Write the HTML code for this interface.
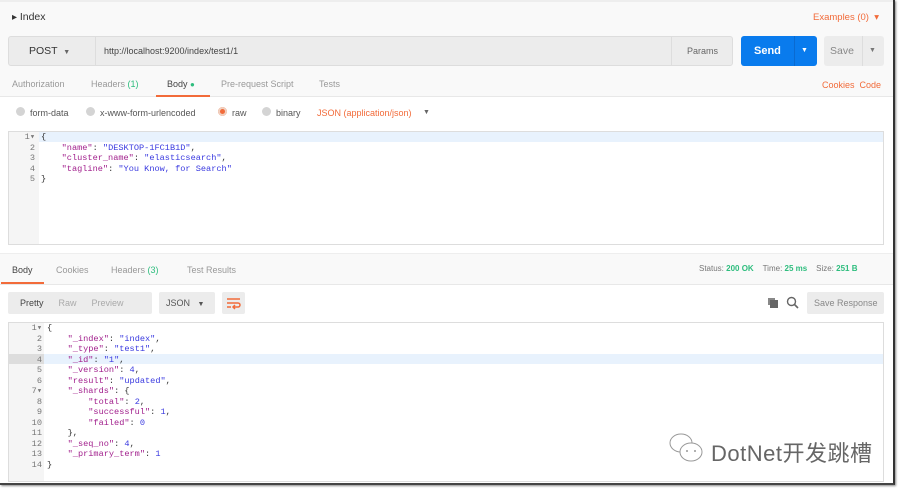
<!DOCTYPE html>
<html><head><meta charset="utf-8"><style>
*{margin:0;padding:0;box-sizing:border-box}
body{width:900px;height:489px;background:#fff;font-family:"Liberation Sans",sans-serif;position:relative;overflow:hidden;font-size:9px;color:#505050}
.a{position:absolute}
.mono{font-family:"Liberation Mono",monospace;font-size:8.6px;line-height:10.5px;white-space:pre}
.k{color:#a11f8c}.s{color:#3a3ae0}.n{color:#3a3ae0}
.org{color:#f26b3a}.grn{color:#2ebd7e}
.dot{position:absolute;width:9px;height:9px;border-radius:50%;background:#d4d4d4;top:107px}
</style></head><body>
<div class="a" style="left:0;top:0;width:895px;height:485px;background:#fff;border-right:2px solid #333;border-bottom:2px solid #444;box-shadow:1px 1px 2px #888"></div>
<div class="a" style="left:0;top:0;width:893px;height:97px;background:#f9f9f9;border-bottom:1px solid #e8e8e8"></div>
<div class="a" style="left:0;top:0;width:893px;height:2px;background:#eee"></div>
<div class="a" style="left:12px;top:11px;font-size:10px;color:#333">▸ <span style="font-size:10.5px">Index</span></div>
<div class="a org" style="left:813px;top:12px;font-size:9.5px">Examples (0) &nbsp;▾</div>
<div class="a" style="left:8px;top:36px;width:725px;height:30px;background:#ececec;border:1px solid #ddd;border-radius:3px"></div>
<div class="a" style="left:95px;top:36px;width:1px;height:30px;background:#ddd"></div>
<div class="a" style="left:671px;top:36px;width:1px;height:30px;background:#ddd"></div>
<div class="a" style="left:29px;top:45px;font-size:10.5px;color:#333">POST &nbsp;<span style="font-size:7px;color:#666">▼</span></div>
<div class="a" style="left:104px;top:46px;font-size:9px;color:#444">http://localhost:9200/index/test1/1</div>
<div class="a" style="left:687px;top:46px;font-size:9px;color:#666">Params</div>
<div class="a" style="left:741px;top:36px;width:76px;height:30px;background:#097bed;border-radius:3px"></div>
<div class="a" style="left:794px;top:36px;width:1px;height:30px;background:#0a6ad0"></div>
<div class="a" style="left:754px;top:45px;font-size:11px;color:#fff;font-weight:bold">Send</div>
<div class="a" style="left:801px;top:47px;font-size:7px;color:#fff">▼</div>
<div class="a" style="left:824px;top:36px;width:60px;height:30px;background:#ececec;border-radius:3px"></div>
<div class="a" style="left:862px;top:36px;width:1px;height:30px;background:#ddd"></div>
<div class="a" style="left:830px;top:45px;font-size:10.5px;color:#888">Save</div>
<div class="a" style="left:869px;top:47px;font-size:7px;color:#777">▼</div>
<div class="a" style="left:12px;top:79px;font-size:9px;color:#999">Authorization</div>
<div class="a" style="left:91px;top:79px;font-size:9px;color:#999">Headers <span class="grn">(1)</span></div>
<div class="a" style="left:167px;top:79px;font-size:9px;color:#444">Body <span class="grn" style="font-size:8px">●</span></div>
<div class="a" style="left:156px;top:95px;width:54px;height:2px;background:#f26b3a"></div>
<div class="a" style="left:221px;top:79px;font-size:9px;color:#999">Pre-request Script</div>
<div class="a" style="left:319px;top:79px;font-size:9px;color:#999">Tests</div>
<div class="a org" style="left:822px;top:80px;font-size:9px">Cookies &nbsp;Code</div>
<div class="dot" style="left:16px"></div>
<div class="a" style="left:30px;top:108px;font-size:9px;color:#555">form-data</div>
<div class="dot" style="left:86px"></div>
<div class="a" style="left:100px;top:108px;font-size:9px;color:#555">x-www-form-urlencoded</div>
<div class="dot" style="left:218px;background:#f26b3a;box-shadow:inset 0 0 0 2px #f0d0c0"></div>
<div class="a" style="left:232px;top:108px;font-size:9px;color:#555">raw</div>
<div class="dot" style="left:262px"></div>
<div class="a" style="left:276px;top:108px;font-size:9px;color:#555">binary</div>
<div class="a org" style="left:317px;top:108px;font-size:9px">JSON (application/json)</div>
<div class="a" style="left:423px;top:109px;font-size:7px;color:#666">▼</div>
<div class="a" style="left:8px;top:131px;width:876px;height:114px;border:1px solid #ddd;background:#fff"></div>
<div class="a" style="left:9px;top:132px;width:30px;height:112px;background:#f5f5f5"></div>
<div class="a" style="left:39px;top:132px;width:844px;height:10px;background:#e8f2fd"></div>
<div class="a mono" style="left:9px;top:132px;width:26px;text-align:right;color:#777">1▾
2
3
4
5</div>
<div class="a mono" style="left:41px;top:132px;color:#333">{
    <span class="k">"name"</span>: <span class="s">"DESKTOP-1FC1B1D"</span>,
    <span class="k">"cluster_name"</span>: <span class="s">"elasticsearch"</span>,
    <span class="k">"tagline"</span>: <span class="s">"You Know, for Search"</span>
}</div>
<div class="a" style="left:0;top:253px;width:893px;height:32px;background:#f9f9f9;border-top:1px solid #eee;border-bottom:1px solid #e8e8e8"></div>
<div class="a" style="left:12px;top:265px;font-size:9px;color:#444">Body</div>
<div class="a" style="left:1px;top:282px;width:43px;height:2px;background:#f26b3a"></div>
<div class="a" style="left:56px;top:265px;font-size:9px;color:#999">Cookies</div>
<div class="a" style="left:111px;top:265px;font-size:9px;color:#999">Headers <span class="grn">(3)</span></div>
<div class="a" style="left:187px;top:265px;font-size:9px;color:#999">Test Results</div>
<div class="a" style="left:699px;top:264px;font-size:8px;color:#777">Status: <b class="grn">200 OK</b> &nbsp;&nbsp;&nbsp;Time: <b class="grn">25 ms</b> &nbsp;&nbsp;&nbsp;Size: <b class="grn">251 B</b></div>
<div class="a" style="left:8px;top:292px;width:144px;height:22px;background:#ececec;border-radius:2px"></div>
<div class="a" style="left:20px;top:298px;font-size:9px;color:#444">Pretty &nbsp;&nbsp;&nbsp;&nbsp;&nbsp;<span style="color:#aaa">Raw</span> &nbsp;&nbsp;&nbsp;&nbsp;&nbsp;<span style="color:#aaa">Preview</span></div>
<div class="a" style="left:159px;top:292px;width:56px;height:22px;background:#ececec;border-radius:2px"></div>
<div class="a" style="left:166px;top:298px;font-size:9px;color:#555">JSON &nbsp;&nbsp;<span style="font-size:7px">▼</span></div>
<div class="a" style="left:222px;top:292px;width:23px;height:22px;background:#ececec;border-radius:2px"></div>
<svg class="a" style="left:226px;top:296px" width="15" height="14" viewBox="0 0 15 14"><path d="M1 3H14M1 7H12a2 2 0 0 1 0 4H8M1 11H5M9 9l-2 2 2 2" stroke="#f26b3a" stroke-width="1.5" fill="none"/></svg>
<svg class="a" style="left:767px;top:297px" width="12" height="12"><rect x="1" y="1" width="7" height="7" fill="#888"/><rect x="3" y="3" width="8" height="8" fill="#666"/></svg>
<svg class="a" style="left:786px;top:296px" width="13" height="13"><circle cx="5.5" cy="5.5" r="4" stroke="#666" stroke-width="1.4" fill="none"/><path d="M8.5 8.5L12 12" stroke="#666" stroke-width="1.6"/></svg>
<div class="a" style="left:807px;top:292px;width:77px;height:22px;background:#ececec;border-radius:2px"></div>
<div class="a" style="left:814px;top:298px;font-size:9px;color:#888">Save Response</div>
<div class="a" style="left:8px;top:322px;width:876px;height:160px;border:1px solid #ddd;background:#fff"></div>
<div class="a" style="left:9px;top:323px;width:35px;height:158px;background:#f5f5f5"></div>
<div class="a" style="left:44px;top:354px;width:839px;height:10px;background:#e8f2fd"></div>
<div class="a" style="left:9px;top:354px;width:35px;height:10px;background:#ddd"></div>
<div class="a mono" style="left:9px;top:323px;width:33px;text-align:right;color:#777">1▾
2
3
4
5
6
7▾
8
9
10
11
12
13
14</div>
<div class="a mono" style="left:47px;top:323px;color:#333">{
    <span class="k">"_index"</span>: <span class="s">"index"</span>,
    <span class="k">"_type"</span>: <span class="s">"test1"</span>,
    <span class="k">"_id"</span>: <span class="s">"1"</span>,
    <span class="k">"_version"</span>: <span class="n">4</span>,
    <span class="k">"result"</span>: <span class="s">"updated"</span>,
    <span class="k">"_shards"</span>: {
        <span class="k">"total"</span>: <span class="n">2</span>,
        <span class="k">"successful"</span>: <span class="n">1</span>,
        <span class="k">"failed"</span>: <span class="n">0</span>
    },
    <span class="k">"_seq_no"</span>: <span class="n">4</span>,
    <span class="k">"_primary_term"</span>: <span class="n">1</span>
}</div>
<svg class="a" style="left:668px;top:430px" width="38" height="36"><ellipse cx="13" cy="13" rx="11" ry="9" fill="none" stroke="#999"/><ellipse cx="23" cy="22" rx="11" ry="9" fill="#fff" stroke="#999"/><circle cx="19" cy="21" r="1" fill="#999"/><circle cx="27" cy="21" r="1" fill="#999"/></svg>
<div class="a" style="left:711px;top:436px;font-size:22px;letter-spacing:0.5px;color:#666;font-family:'Liberation Sans','Noto Sans CJK SC',sans-serif">DotNet开发跳槽</div>
</body></html>
